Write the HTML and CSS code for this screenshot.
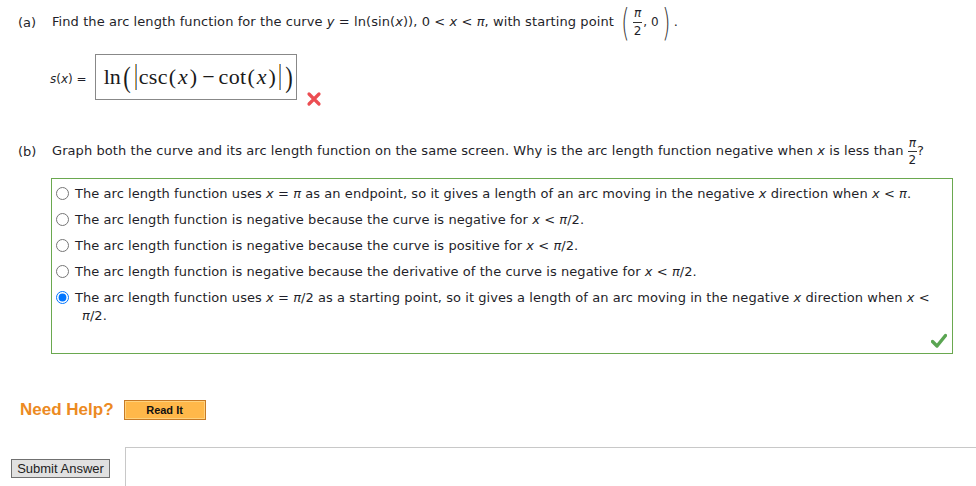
FILE: index.html
```html
<!DOCTYPE html>
<html>
<head>
<meta charset="utf-8">
<link rel="stylesheet" href="styles.css">
</head>
<body>
<div class="page">
  <div class="part part-a">
    <span class="label">(a)</span>
    <span class="qtext">Find the arc length function for the curve <i>y</i> = ln(sin(<i>x</i>)), 0 &lt; <i>x</i> &lt; <i>π</i>, with starting point
      <span class="point"><span class="bigparen">(</span><span class="frac"><span class="num"><i>π</i></span><span class="den">2</span></span><span class="comma">, 0</span><span class="bigparen">)</span></span>.</span>
  </div>

  <div class="answer-row">
    <span class="sx"><i>s</i>(<i>x</i>) =</span>
    <div class="answer-box">
      <span class="m">ln</span><span class="paren tall">(</span><span class="bar"></span><span class="m sp">csc</span><span class="paren">(</span><span class="m var">x</span><span class="paren">)</span><span class="m minus">−</span><span class="m sp">cot</span><span class="paren">(</span><span class="m var">x</span><span class="paren">)</span><span class="bar"></span><span class="paren tall">)</span>
    </div>
    <svg class="xmark" width="16" height="16" viewBox="0 0 16 16"><path d="M3 3 L13 13 M13 3 L3 13" stroke="#ec4d52" stroke-width="3.2" stroke-linecap="round"/></svg>
  </div>

  <div class="part part-b">
    <span class="label">(b)</span>
    <span class="qtext">Graph both the curve and its arc length function on the same screen. Why is the arc length function negative when <i>x</i> is less than <span class="frac small"><span class="num"><i>π</i></span><span class="den">2</span></span>?</span>
  </div>

  <div class="choices">
    <label class="choice"><input type="radio" name="q"><span>The arc length function uses <i>x</i> = <i>π</i> as an endpoint, so it gives a length of an arc moving in the negative <i>x</i> direction when <i>x</i> &lt; <i>π</i>.</span></label>
    <label class="choice"><input type="radio" name="q"><span>The arc length function is negative because the curve is negative for <i>x</i> &lt; <i>π</i>/2.</span></label>
    <label class="choice"><input type="radio" name="q"><span>The arc length function is negative because the curve is positive for <i>x</i> &lt; <i>π</i>/2.</span></label>
    <label class="choice"><input type="radio" name="q"><span>The arc length function is negative because the derivative of the curve is negative for <i>x</i> &lt; <i>π</i>/2.</span></label>
    <label class="choice"><input type="radio" name="q" checked><span>The arc length function uses <i>x</i> = <i>π</i>/2 as a starting point, so it gives a length of an arc moving in the negative <i>x</i> direction when <i>x</i> &lt;<span class="cont"><i>π</i>/2.</span></span></label>
    <svg class="check" width="16" height="15" viewBox="0 0 16 15"><path d="M1.5 8.5 L6 13 L14.5 2.5" fill="none" stroke="#5aa552" stroke-width="3.4" stroke-linecap="round" stroke-linejoin="round"/></svg>
  </div>

  <div class="help">
    <span class="need">Need Help?</span>
    <button class="readit">Read It</button>
  </div>

  <div class="submit-row">
    <button class="submit">Submit Answer</button>
    <div class="notes"></div>
  </div>
</div>
</body>
</html>
```

FILE: styles.css
```css
html, body {
  margin: 0;
  padding: 0;
  background: #fff;
}
body {
  font-family: "DejaVu Sans", Verdana, sans-serif;
  font-size: 13px;
  color: #1f1f2a;
  overflow: hidden;
}
.page {
  width: 976px;
  height: 486px;
  position: relative;
}
i { font-style: italic; }

.part {
  display: flex;
  align-items: center;
  padding-left: 18px;
  font-size: 13px;
}
.label {
  width: 34px;
  flex: none;
}
.part-a {
  height: 44px;
}
.qtext { letter-spacing: 0.08px; }
.point {
  display: inline-flex;
  align-items: center;
  vertical-align: middle;
}
.bigparen {
  font-family: "DejaVu Sans", sans-serif;
  font-size: 38px;
  font-weight: 200;
  transform: scaleX(0.55);
  display: inline-block;
  line-height: 40px;
  color: #333;
}
.comma { margin: 0 0 0 1px; font-size: 12px; }
.frac {
  display: inline-flex;
  flex-direction: column;
  align-items: center;
  vertical-align: middle;
  font-size: 12px;
  line-height: 14px;
}
.point .frac { line-height: 15px; }
.frac .num {
  border-bottom: 1px solid #333;
  padding: 0 1px 1px;
}
.frac .den { padding-top: 1px; }

.answer-row {
  display: flex;
  align-items: center;
  padding-left: 50px;
  margin-top: 10px;
  height: 46px;
}
.sx {
  font-size: 12px;
  margin-right: 8px;
  margin-top: 3px;
}
.answer-box {
  box-sizing: border-box;
  width: 202px;
  height: 46px;
  border: 1px solid #888;
  display: flex;
  align-items: center;
  padding-left: 8px;
  font-family: "Liberation Serif", "Times New Roman", serif;
  font-size: 22px;
  color: #1a1a1a;
}
.answer-box .m { line-height: 24px; }
.answer-box .sp { letter-spacing: 0.3px; }
.answer-box .var { font-style: italic; padding: 0 1px; }
.answer-box .minus { margin: 0 4px; }
.answer-box .paren { font-size: 22px; margin: 0 1px; }
.answer-box .paren.tall {
  font-size: 30px;
  transform: scaleX(0.75);
  display: inline-block;
  margin: 0 1px;
}
.answer-box .bar {
  display: inline-block;
  width: 1px;
  height: 26px;
  background: #d99a3a;
  border-right: 1px solid #5b8fd1;
  margin: 0 2px;
}
.xmark {
  margin-left: 9px;
  align-self: flex-end;
  margin-bottom: -7px;
}

.part-b {
  margin-top: 34px;
  height: 34px;
}

.choices {
  position: relative;
  margin-left: 51px;
  margin-top: 10px;
  width: 902px;
  height: 176px;
  box-sizing: border-box;
  border: 1px solid #6aa84f;
  padding: 6px 0 0 4px;
  display: flex;
  flex-direction: column;
  gap: 8px;
}
.choice {
  display: flex;
  align-items: flex-start;
  line-height: 18px;
  color: #1f1f2a;
  letter-spacing: 0.06px;
}
.choice input {
  margin: 2px 6px 0 0;
  width: 13px;
  height: 13px;
  flex: none;
}
.cont {
  display: block;
  padding-left: 7px;
}
.check {
  position: absolute;
  right: 5px;
  bottom: 5px;
}

.help {
  display: flex;
  align-items: center;
  padding-left: 20px;
  margin-top: 46px;
  height: 20px;
}
.need {
  font-family: "Liberation Sans", Arial, sans-serif;
  font-weight: bold;
  font-size: 17px;
  color: #ec8a22;
  margin-right: 10px;
}
.readit {
  box-sizing: border-box;
  width: 82px;
  height: 20px;
  padding: 0;
  background: #ffb84a;
  border: 1px solid #c77a25;
  box-shadow: inset 0 0 0 1px #ffd27d;
  font-family: "Liberation Sans", Arial, sans-serif;
  font-weight: bold;
  font-size: 11px;
  color: #111;
}

.submit-row {
  display: flex;
  align-items: flex-start;
  margin-top: 27px;
  padding-left: 11px;
}
.submit {
  margin-top: 12px;
  box-sizing: border-box;
  width: 99px;
  height: 19px;
  padding: 0;
  background: #e1e1e1;
  border: 1px solid #707070;
  font-family: "Liberation Sans", Arial, sans-serif;
  font-size: 13px;
  color: #222;
}
.notes {
  margin-left: 15px;
  flex: 1;
  height: 60px;
  border-top: 1px solid #c8c8c8;
  border-left: 1px solid #c8c8c8;
}
```
